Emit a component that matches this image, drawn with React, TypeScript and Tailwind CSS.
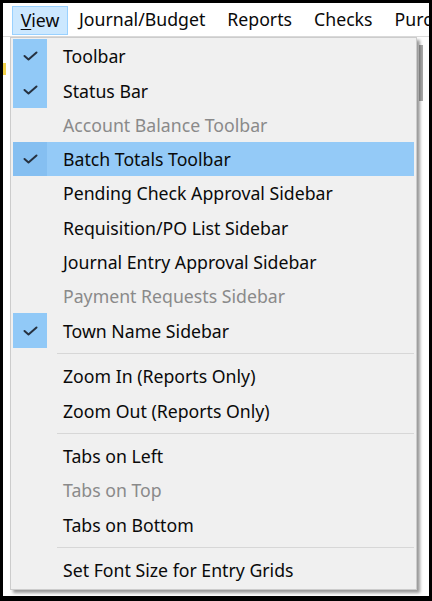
import React from 'react';

type Item =
    | { kind: 'item'; label: string; checked?: boolean; disabled?: boolean; active?: boolean }
    | { kind: 'sep' };

const items: Item[] = [
    { kind: 'item', label: 'Toolbar', checked: true },
    { kind: 'item', label: 'Status Bar', checked: true },
    { kind: 'item', label: 'Account Balance Toolbar', disabled: true },
    { kind: 'item', label: 'Batch Totals Toolbar', checked: true, active: true },
    { kind: 'item', label: 'Pending Check Approval Sidebar' },
    { kind: 'item', label: 'Requisition/PO List Sidebar' },
    { kind: 'item', label: 'Journal Entry Approval Sidebar' },
    { kind: 'item', label: 'Payment Requests Sidebar', disabled: true },
    { kind: 'item', label: 'Town Name Sidebar', checked: true },
    { kind: 'sep' },
    { kind: 'item', label: 'Zoom In (Reports Only)' },
    { kind: 'item', label: 'Zoom Out (Reports Only)' },
    { kind: 'sep' },
    { kind: 'item', label: 'Tabs on Left' },
    { kind: 'item', label: 'Tabs on Top', disabled: true },
    { kind: 'item', label: 'Tabs on Bottom' },
    { kind: 'sep' },
    { kind: 'item', label: 'Set Font Size for Entry Grids' },
];

function Check() {
    return (
        <svg width="15" height="10" viewBox="0 0 15 10" fill="none">
            <polyline points="1.5,5 5.5,8.5 13.5,1.5" stroke="#263140" strokeWidth="2" strokeLinecap="round" strokeLinejoin="round" />
        </svg>
    );
}

function MenuRow({ item }: { item: Item }) {
    if (item.kind === 'sep') {
        return (
            <div className="h-[11.3px] flex items-center">
                <div className="h-px bg-[#d7d7d7] ml-[46px] mr-[2px] flex-1" />
            </div>
        );
    }
    return (
        <div className={`h-[34.3px] mx-[2px] flex items-center ${item.active ? 'bg-[#94caf7]' : ''}`}>
            <div
                className={`w-[34px] h-full flex items-center justify-center ${
                    item.checked ? (item.active ? 'bg-[#85bff1]' : 'bg-[#91c9f7]') : ''
                }`}
            >
                {item.checked && <Check />}
            </div>
            <span className={`ml-[16px] pt-[2px] whitespace-nowrap ${item.disabled ? 'text-[#8a8a8a]' : 'text-[#0a0a0a]'}`}>
                {item.label}
            </span>
        </div>
    );
}

export default function App() {
    return (
        <div className="w-[432px] h-[601px] bg-black pt-[3px] pl-[3px] pr-[3px] pb-[5px]">
            <div
                className="relative w-full h-full bg-white overflow-hidden text-[17.7px] leading-none"
                style={{ fontFamily: '"Noto Sans", "Open Sans", sans-serif' }}
            >
                {/* menu bar */}
                <div className="h-[34px] flex items-center border-b border-[#dadada] text-[#0a0a0a] overflow-hidden">
                    <div className="shrink-0 ml-[9px] w-[56px] h-[29px] mt-[1px] pt-[1px] bg-[#cce8ff] border border-[#99d1ff] flex items-center justify-center">
                        <span><span className="underline underline-offset-2">V</span>iew</span>
                    </div>
                    <span className="shrink-0 px-[11px] pt-[1px]">Journal/Budget</span>
                    <span className="shrink-0 px-[11px] pt-[1px]">Reports</span>
                    <span className="shrink-0 px-[11px] pt-[1px]">Checks</span>
                    <span className="shrink-0 px-[11px] pt-[1px]">Purc</span>
                </div>

                {/* bits of the app behind the menu */}
                <div className="absolute left-0 top-[60px] w-[3px] h-[12px] bg-[#f2d24a]" />
                <div className="absolute left-[416px] top-[42px] w-[4px] h-[56px] bg-[#a8a8a8]" />

                {/* dropdown */}
                <div className="absolute left-[7px] top-[34px] w-[407px] h-[553px] bg-[#f0f0f0] border border-[#cccccc] pt-[1px] shadow-[3px_3px_3px_rgba(0,0,0,0.4)]">
                    {items.map((item, i) => (
                        <MenuRow key={i} item={item} />
                    ))}
                </div>
            </div>
        </div>
    );
}
